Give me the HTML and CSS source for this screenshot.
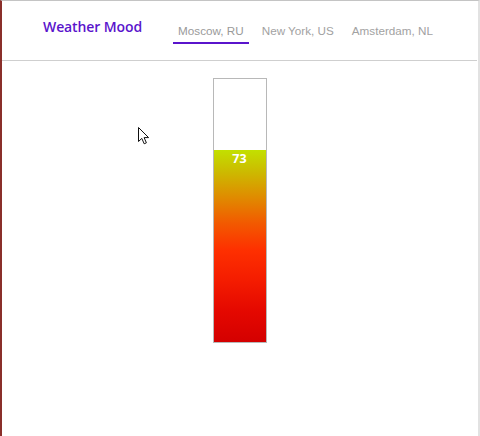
FILE: index.html
```html
<!DOCTYPE html>
<html>
<head>
<meta charset="utf-8">
<link rel="stylesheet" href="styles.css">
</head>
<body>
<div class="frame">
  <header class="header">
    <div class="brand">Weather Mood</div>
    <nav class="tabs">
      <span class="tab active">Moscow, RU</span>
      <span class="tab">New York, US</span>
      <span class="tab">Amsterdam, NL</span>
    </nav>
  </header>
  <main class="main">
    <div class="thermo">
      <div class="fill" style="height:73%">
        <span class="value">73</span>
      </div>
    </div>
  </main>
  <svg class="cursor" width="12" height="18" viewBox="0 0 12 18">
    <path d="M0.5 0.5 L0.5 14.5 L3.8 11.4 L6.2 16.8 L8.4 15.8 L6.1 10.6 L10.6 10.6 Z" fill="#fff" stroke="#111" stroke-width="1" stroke-linejoin="round"/>
  </svg>
</div>
</body>
</html>
```
FILE: styles.css
```css
html, body {
  margin: 0;
  padding: 0;
  background: #fff;
}
.frame {
  position: relative;
  width: 476px;
  height: 435px;
  border-top: 1px solid #c4c4c4;
  border-left: 2px solid #8a2f2a;
  border-right: 2px solid #e2e2e2;
  font-family: "Liberation Sans", Arial, sans-serif;
}
.header {
  display: flex;
  align-items: flex-start;
  height: 59px;
  border-bottom: 1px solid #cfcfcf;
  margin-right: 1px;
}
.brand {
  font-family: "Open Sans", sans-serif;
  font-weight: 600;
  font-size: 14px;
  color: #5a14cc;
  margin-left: 41px;
  margin-top: 16px;
  letter-spacing: -0.1px;
}
.tabs {
  display: flex;
  gap: 8px;
  margin-left: 31px;
  margin-top: 23px;
}
.tab {
  font-size: 11.7px;
  color: #a2a2a2;
  padding: 0 5px 4px;
  line-height: 14px;
  border-bottom: 2px solid transparent;
}
.tab.active {
  color: #9a9a9a;
  border-bottom-color: #5a14cc;
}
.main {
  display: flex;
  justify-content: center;
  padding-top: 17px;
  padding-right: 1px;
}
.thermo {
  width: 52px;
  height: 263px;
  border: 1px solid #b8b8b8;
  display: flex;
  flex-direction: column;
  justify-content: flex-end;
}
.fill {
  width: 100%;
  background: linear-gradient(to bottom,
    #c2e000 0%,
    #cdb800 12%,
    #e08a00 25%,
    #f25a00 38%,
    #fe3000 52%,
    #f41c00 68%,
    #e40800 84%,
    #d40000 100%);
  display: flex;
  justify-content: center;
}
.value {
  font-family: "Open Sans", sans-serif;
  font-weight: 700;
  font-size: 12.5px;
  color: #fff;
  line-height: 16px;
  margin-top: 1px;
}
.cursor {
  position: absolute;
  left: 136px;
  top: 126px;
}
```
